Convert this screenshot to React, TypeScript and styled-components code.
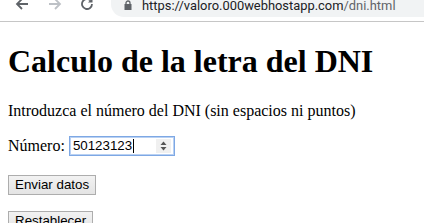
import styled, {createGlobalStyle} from "styled-components";

const Global = createGlobalStyle`
    html, body {
        margin: 0;
        padding: 0;
        background: #ffffff;
    }
    body {
        font-family: "Liberation Serif", "Times New Roman", serif;
        color: #000000;
    }
`

const Chrome = styled.div`
    height: 21px;
    overflow: hidden;
    border-bottom: 1px solid #c6c6c6;
    background: #ffffff;
`

const ChromeRow = styled.div`
    display: flex;
    align-items: center;
    height: 26px;
    margin-top: -9px;
`

const NavButton = styled.div<{ $left: number }>`
    width: 16px;
    height: 16px;
    margin-left: ${p => p.$left}px;
    display: flex;
    align-items: center;
    justify-content: center;
`

const Omnibox = styled.div`
    flex: 1;
    height: 26px;
    margin-left: 16px;
    background: #f1f3f4;
    border-radius: 0 0 0 13px;
    display: flex;
    align-items: center;
    padding-left: 13px;
    padding-top: 2px;
    box-sizing: border-box;
`

const Url = styled.span`
    margin-left: 10px;
    font-family: Roboto, "Noto Sans", sans-serif;
    font-size: 12.9px;
    color: #202124;
    white-space: nowrap;
`

const UrlPath = styled.span`
    color: #5f6368;
`

const Page = styled.div`
    margin: 8px;
`

const Title = styled.h1`
    font-size: 32px;
    font-weight: bold;
    margin: 21.44px 0;
`

const Paragraph = styled.p`
    font-size: 16px;
    margin: 16px 0;
    display: flex;
    align-items: center;
`

const Label = styled.span`
    margin-right: 4px;
`

const NumberField = styled.div`
    width: 106px;
    height: 20px;
    box-sizing: border-box;
    border: 1px solid #7ea8e4;
    box-shadow: inset 0 0 0 1px #b9d1f3;
    display: flex;
    align-items: center;
    padding-left: 3px;
    font-family: "Liberation Sans", Arial, sans-serif;
    font-size: 13.33px;
`

const Caret = styled.span`
    display: inline-block;
    width: 1px;
    height: 14px;
    background: #000000;
    margin-left: 1px;
`

const Spinner = styled.div`
    margin-left: auto;
    margin-right: 3px;
    width: 15px;
    height: 14px;
    background: #f0f0f0;
    display: flex;
    align-items: center;
    justify-content: center;
`

const Button = styled.button`
    font-family: "Liberation Sans", Arial, sans-serif;
    font-size: 13.33px;
    color: #000000;
    height: 20px;
    padding: 0 6px;
    border: 1px solid #adadad;
    border-radius: 0;
    background: linear-gradient(#f2f2f2, #e4e4e4);
    display: block;
`

const ButtonRow = styled.div<{ $top: number }>`
    margin-top: ${p => p.$top}px;
`

export default function App() {
    return (
        <>
            <Global/>
            <Chrome>
                <ChromeRow>
                    <NavButton $left={14}>
                        <svg width="16" height="16" viewBox="0 0 16 16">
                            <path d="M14 8H3.5M8 3L3 8l5 5" stroke="#5f6368" strokeWidth="1.8" fill="none"/>
                        </svg>
                    </NavButton>
                    <NavButton $left={17}>
                        <svg width="16" height="16" viewBox="0 0 16 16">
                            <path d="M2 8h10.5M8 3l5 5-5 5" stroke="#bdc1c6" strokeWidth="1.8" fill="none"/>
                        </svg>
                    </NavButton>
                    <NavButton $left={16}>
                        <svg width="16" height="16" viewBox="0 0 16 16">
                            <path d="M13 8a5 5 0 1 1-1.5-3.6" stroke="#5f6368" strokeWidth="1.8" fill="none"/>
                            <path d="M13.5 2v4.5H9z" fill="#5f6368"/>
                        </svg>
                    </NavButton>
                    <Omnibox>
                        <svg width="8" height="10" viewBox="0 0 8 10">
                            <path d="M2 4V3a2 2 0 0 1 4 0v1" stroke="#5f6368" strokeWidth="1.3" fill="none"/>
                            <rect x="0.5" y="4" width="7" height="6" fill="#5f6368"/>
                        </svg>
                        <Url>
                            https://valoro.000webhostapp.com<UrlPath>/dni.html</UrlPath>
                        </Url>
                    </Omnibox>
                </ChromeRow>
            </Chrome>
            <Page>
                <Title>Calculo de la letra del DNI</Title>
                <Paragraph>Introduzca el número del DNI (sin espacios ni puntos)</Paragraph>
                <Paragraph>
                    <Label>Número:</Label>
                    <NumberField>
                        50123123<Caret/>
                        <Spinner>
                            <svg width="7" height="10" viewBox="0 0 7 10">
                                <path d="M0.5 4L3.5 0.5 6.5 4z" fill="#555"/>
                                <path d="M0.5 6L3.5 9.5 6.5 6z" fill="#555"/>
                            </svg>
                        </Spinner>
                    </NumberField>
                </Paragraph>
                <ButtonRow $top={19}>
                    <Button>Enviar datos</Button>
                </ButtonRow>
                <ButtonRow $top={16}>
                    <Button>Restablecer</Button>
                </ButtonRow>
            </Page>
        </>
    )
}
